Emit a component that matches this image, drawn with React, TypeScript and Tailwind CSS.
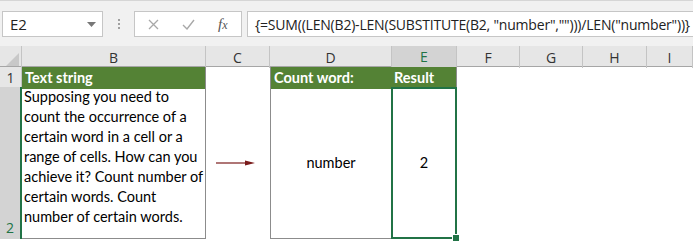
import React from "react";

const cols = "grid grid-cols-[22px_184px_64px_122px_65px_63px_63px_64px_1fr]";
const letters = ["B", "C", "D", "E", "F", "G", "H", "I"];
const lines = [
  "Supposing you need to",
  "count the occurrence of a",
  "certain word in a cell or a",
  "range of cells. How can you",
  "achieve it? Count number of",
  "certain words. Count",
  "number of certain words.",
];

function Toolbar() {
  return (
    <div className="h-[46px] bg-[#f1f1f1] border-t border-[#d6d6d6] flex items-start pt-[10px]">
      {/* Name box */}
      <div className="ml-[2px] w-[101px] h-[26px] bg-white border border-[#c6c6c6] flex items-center pl-[7px] pr-[6px]">
        <span className="text-[15px] text-[#222] flex-1">E2</span>
        <svg width="9" height="5" viewBox="0 0 9 5">
          <path d="M0 0h9L4.5 5z" fill="#777" />
        </svg>
      </div>
      <div className="w-[31px] h-[26px] flex flex-col items-center justify-center gap-[2px]">
        <span className="w-[2px] h-[2px] bg-[#a0a0a0]" />
        <span className="w-[2px] h-[2px] bg-[#a0a0a0]" />
        <span className="w-[2px] h-[2px] bg-[#a0a0a0]" />
      </div>
      {/* Cancel / enter / fx */}
      <div className="w-[108px] h-[26px] bg-white border border-[#c6c6c6] flex items-center">
        <svg className="ml-[13px]" width="11" height="11" viewBox="0 0 11 11">
          <path d="M1 1l9 9M10 1l-9 9" stroke="#a8a8a8" strokeWidth="1.3" />
        </svg>
        <svg className="ml-[23px]" width="13" height="11" viewBox="0 0 13 11">
          <path d="M1 6l4 4 7-9" stroke="#a8a8a8" strokeWidth="1.4" fill="none" />
        </svg>
        <span className="ml-[23px] italic text-[15px] text-[#555] [font-family:'Liberation_Serif',serif]">
          f<span className="text-[12px]">x</span>
        </span>
      </div>
      <div className="ml-[5px] flex-1 h-[26px] bg-white border border-[#c6c6c6] border-r-0 flex items-center pl-[7px]">
        <span className="text-[14px] text-[#222] whitespace-nowrap tracking-[-0.2px]">
          {'{=SUM((LEN(B2)-LEN(SUBSTITUTE(B2, "number","")))/LEN("number"))}'}
        </span>
      </div>
    </div>
  );
}

function ColumnHeader() {
  return (
    <div className={`${cols} h-[21px] bg-[#e6e6e6] border-b border-[#a6a6a6] text-[14px] text-[#333]`}>
      <div className="relative border-r border-[#c4c4c4]">
        <svg className="absolute right-[2px] bottom-[2px]" width="13" height="13" viewBox="0 0 13 13">
          <path d="M13 0V13H0z" fill="#c8c8c8" />
        </svg>
      </div>
      {letters.map((l) =>
        l === "E" ? (
          <div
            key={l}
            className="bg-[#d3d3d3] text-[#217346] border-r border-[#c4c4c4] border-b-2 border-b-[#217346] -mb-[1px] flex items-center justify-center"
          >
            {l}
          </div>
        ) : (
          <div key={l} className="border-r border-[#c4c4c4] flex items-center justify-center">
            {l}
          </div>
        )
      )}
    </div>
  );
}

export default function App() {
  return (
    <div className="w-[693px] h-[248px] overflow-hidden bg-white [font-family:'Open_Sans',sans-serif]">
      <Toolbar />
      <ColumnHeader />

      {/* Row 1 */}
      <div className={`${cols} h-[20px] text-[14.5px] [font-family:'Lato',sans-serif]`}>
        <div className="bg-[#e6e6e6] border-r border-[#c4c4c4] border-b border-b-[#d8d8d8] flex items-center justify-center text-[#333] [font-family:'Open_Sans',sans-serif] text-[14px]">
          1
        </div>
        <div className="bg-[#548235] text-white font-bold pl-[3px] flex items-center border-r border-[#8c8c8c]">
          Text string
        </div>
        <div />
        <div className="bg-[#548235] text-white font-bold pl-[3px] flex items-center border-l border-r border-[#8c8c8c]">
          Count word:
        </div>
        <div className="bg-[#548235] text-white font-bold pl-[3px] flex items-center border-r border-[#8c8c8c] -ml-[1px]">
          Result
        </div>
        <div />
        <div />
        <div />
        <div />
      </div>

      {/* Row 2 */}
      <div className={`${cols} h-[152px] text-[14.5px] text-black [font-family:'Lato',sans-serif]`}>
        <div className="bg-[#d3d3d3] border-r-2 border-[#217346] flex items-end justify-center pb-[1px] text-[#217346] [font-family:'Open_Sans',sans-serif] text-[14px]">
          2
        </div>
        <div className="border-r border-b border-[#8c8c8c] pl-[2px] leading-[20px]">
          {lines.map((l) => (
            <div key={l} className="whitespace-nowrap">
              {l}
            </div>
          ))}
        </div>
        <div className="flex items-center pl-[10px]">
          <svg width="40" height="8" viewBox="0 0 40 8">
            <path d="M0 4H31" stroke="#7a1b1b" strokeWidth="1.2" />
            <path d="M29 1.5L39 4L29 6.5z" fill="#7a1b1b" />
          </svg>
        </div>
        <div className="border-l border-r border-b border-[#8c8c8c] flex items-center justify-center">
          number
        </div>
        <div className="relative border-2 border-[#217346] -ml-[1px] flex items-center justify-center">
          2
          <span className="absolute -right-[4px] -bottom-[4px] w-[6px] h-[6px] bg-[#217346] outline outline-1 outline-white" />
        </div>
        <div />
        <div />
        <div />
        <div />
      </div>

      {/* Row 3 */}
      <div className={`${cols} h-[20px]`}>
        <div className="bg-[#e6e6e6] border-r border-[#c4c4c4] flex items-end justify-center text-[14px] text-[#333] translate-y-[11px]">
          3
        </div>
      </div>
    </div>
  );
}
